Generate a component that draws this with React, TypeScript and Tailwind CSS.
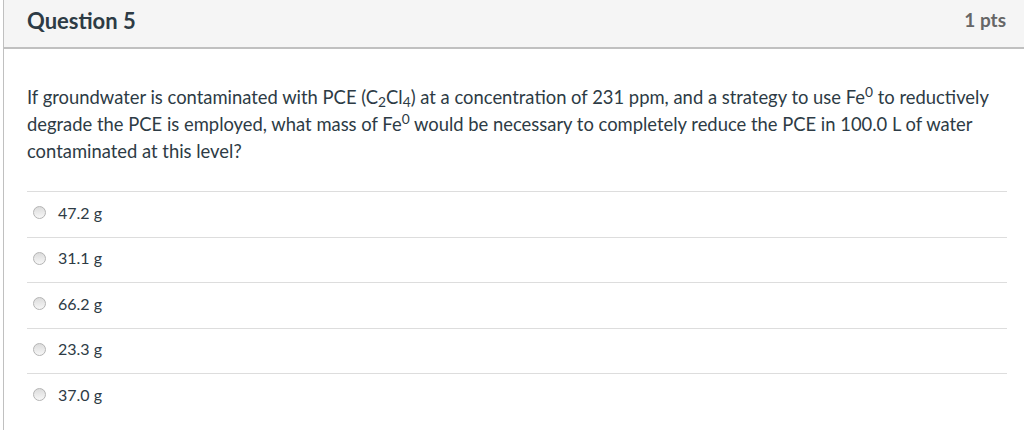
const answers = ["47.2 g", "31.1 g", "66.2 g", "23.3 g", "37.0 g"]

function Radio() {
  return (
    <span className="block w-[13px] h-[13px] shrink-0 rounded-full border border-[#b4b4b4] bg-gradient-to-b from-[#dcdcdc] to-[#f7f7f7]" />
  )
}

export default function App() {
  return (
    <div className="h-[430px] w-full overflow-hidden bg-white font-['Lato','Liberation_Sans',sans-serif] text-[#2d3b45]">
      <div className="ml-[3px] h-full border-l border-[#c0c0c0]">
        <div className="flex h-[49px] items-center justify-between border-b-2 border-[#c0c0c0] bg-[#f5f5f5] pl-[23px] pr-[18px] pb-[6px]">
          <h2 className="text-[22px] font-bold">Question 5</h2>
          <span className="text-[19px] font-bold text-[#666]">1 pts</span>
        </div>

        <div className="pl-[23px] pr-[17px]">
          <p className="pt-[35px] pb-[26px] text-[18.4px] leading-[27px]">
            If groundwater is contaminated with PCE (C<sub>2</sub>Cl<sub>4</sub>) at a concentration of 231 ppm, and
            a strategy to use Fe<sup>0</sup> to reductively degrade the PCE is employed, what mass of Fe
            <sup>0</sup> would be necessary to completely reduce the PCE in 100.0 L of water contaminated at this
            level?
          </p>

          <div>
            {answers.map((a) => (
              <div key={a} className="flex h-[45.5px] items-center gap-[12px] border-t border-[#dddddd] pl-[6px] pb-[3px]">
                <Radio />
                <span className="text-[16px]">{a}</span>
              </div>
            ))}
          </div>
        </div>
      </div>
    </div>
  )
}
